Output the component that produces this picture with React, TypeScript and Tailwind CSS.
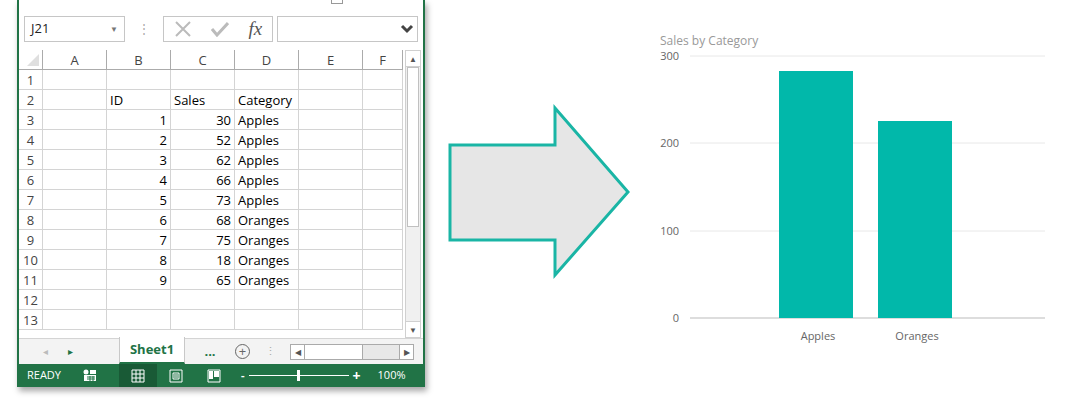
import React from "react";

const rows: (string | number)[][] = [
  ["", "", "", ""],
  ["", "ID", "Sales", "Category"],
  ["", 1, 30, "Apples"],
  ["", 2, 52, "Apples"],
  ["", 3, 62, "Apples"],
  ["", 4, 66, "Apples"],
  ["", 5, 73, "Apples"],
  ["", 6, 68, "Oranges"],
  ["", 7, 75, "Oranges"],
  ["", 8, 18, "Oranges"],
  ["", 9, 65, "Oranges"],
  ["", "", "", ""],
  ["", "", "", ""],
];
const cols = ["A", "B", "C", "D", "E", "F"];

function Cell({ v, right }: { v: string | number; right?: boolean }) {
  return (
    <div className={`h-[20px] border-r border-b border-[#d4d4d4] px-[3px] text-[13px] leading-[20px] text-black overflow-hidden whitespace-nowrap ${right ? "text-right" : ""}`}>
      {v}
    </div>
  );
}

export default function App() {
  return (
    <div className="w-[1066px] h-[403px] bg-white relative flex overflow-hidden" style={{ fontFamily: "'Segoe UI', 'Open Sans', 'Liberation Sans', sans-serif" }}>
      {/* Excel window */}
      <div className="ml-[17px] w-[408px] h-[387px] border-x-[2px] border-[#217346] flex flex-col bg-white shadow-[2px_4px_6px_rgba(0,0,0,0.35)]">
        <div className="h-[4px] relative">
          <div className="absolute right-[80px] top-0 w-[12px] h-[4px] border-x border-b border-[#999]" />
        </div>
        <div className="h-[12px]" />
        {/* formula bar */}
        <div className="flex items-center h-[26px] px-[5px] gap-[4px]">
          <div className="w-[101px] h-[26px] border border-[#c6c6c6] flex items-center justify-between px-[6px] text-[13px] text-[#222]">
            <span>J21</span>
            <span className="text-[8px] text-[#777]">▼</span>
          </div>
          <div className="w-[30px] text-center text-[#aaa] text-[12px]">⋮</div>
          <div className="w-[110px] h-[26px] border border-[#c6c6c6] flex items-center justify-around">
            <svg width="18" height="16" viewBox="0 0 18 16"><path d="M2 1L16 15M16 1L2 15" stroke="#bbb" strokeWidth="2" /></svg>
            <svg width="18" height="16" viewBox="0 0 18 16"><path d="M1 8L6 14L17 2" stroke="#bbb" strokeWidth="3" fill="none" /></svg>
            <span className="italic text-[19px] text-[#555]" style={{ fontFamily: "'Liberation Serif', serif" }}>fx</span>
          </div>
          <div className="flex-1 h-[26px] border border-[#c6c6c6] flex items-center justify-end pr-[3px]">
            <svg width="14" height="10" viewBox="0 0 14 10"><path d="M2 2L7 7L12 2" stroke="#444" strokeWidth="3" fill="none" /></svg>
          </div>
        </div>
        <div className="h-[8px]" />
        {/* grid + scrollbar */}
        <div className="flex h-[288px]">
          <div className="w-[384px] grid grid-cols-[24px_64px_64px_64px_64px_64px_40px] auto-rows-[20px] content-start overflow-hidden">
            <div className="h-[20px] border-r border-b border-[#ababab] relative bg-white">
              <div className="absolute right-[3px] bottom-[3px] w-0 h-0 border-l-[12px] border-l-transparent border-b-[12px] border-b-[#dfdfdf]" />
            </div>
            {cols.map((c) => (
              <div key={c} className="h-[20px] border-r border-b border-[#ababab] text-center text-[13px] leading-[20px] text-[#444]">{c}</div>
            ))}
            {rows.map((r, i) => (
              <React.Fragment key={i}>
                <div className="h-[20px] border-r border-b border-[#d4d4d4] text-center text-[13px] leading-[20px] text-[#444] bg-white">{i + 1}</div>
                <Cell v={r[0]} />
                <Cell v={r[1]} right={typeof r[1] === "number"} />
                <Cell v={r[2]} right={typeof r[2] === "number"} />
                <Cell v={r[3]} />
                <Cell v="" />
                <Cell v="" />
              </React.Fragment>
            ))}
          </div>
          <div className="w-[16px] ml-[2px] flex flex-col bg-[#f0f0f0] border border-[#d0d0d0]">
            <div className="h-[16px] bg-white border-b border-[#d0d0d0] flex items-center justify-center text-[8px] text-[#555]">▲</div>
            <div className="h-[160px] mx-[1px] bg-white border border-[#c0c0c0]" />
            <div className="flex-1" />
            <div className="h-[16px] bg-white border-t border-[#d0d0d0] flex items-center justify-center text-[8px] text-[#555]">▼</div>
          </div>
        </div>
        {/* tabs */}
        <div className="h-[26px] bg-[#f3f3f3] flex items-end border-t border-[#d4d4d4] text-[13px]">
          <div className="w-[100px] h-full flex items-center gap-[20px] pl-[24px] text-[10px]">
            <span className="text-[#bbb]">◂</span><span className="text-[#217346]">▸</span>
          </div>
          <div className="w-[66px] h-[27px] bg-white border-x border-[#c8c8c8] border-b-[2px] border-b-[#217346] text-[#217346] font-bold flex items-center justify-center">Sheet1</div>
          <div className="w-[50px] h-full flex items-center justify-center text-[#217346] font-bold">...</div>
          <div className="h-full flex items-center">
            <div className="w-[15px] h-[15px] rounded-full border border-[#666] flex items-center justify-center text-[13px] leading-none text-[#666]">+</div>
          </div>
          <div className="w-[40px] h-full flex items-center justify-center text-[#aaa] text-[11px]">⋮</div>
          <div className="h-full flex items-center">
            <div className="w-[124px] h-[16px] border border-[#aaa] bg-[#e8e8e8] flex">
              <div className="w-[14px] bg-white border-r border-[#aaa] text-[8px] flex items-center justify-center text-[#555]">◀</div>
              <div className="w-[58px] bg-white border-r border-[#aaa]" />
              <div className="flex-1" />
              <div className="w-[14px] bg-white border-l border-[#aaa] text-[8px] flex items-center justify-center text-[#555]">▶</div>
            </div>
          </div>
        </div>
        {/* status bar */}
        <div className="h-[23px] bg-[#217346] flex items-center text-white text-[11px]">
          <span className="ml-[8px] w-[50px]">READY</span>
          <svg className="ml-[6px]" width="14" height="13" viewBox="0 0 14 13"><circle cx="3" cy="3" r="2.5" fill="white" /><rect x="1" y="6" width="12" height="6" fill="white" /><rect x="7" y="1" width="6" height="4" fill="white" /><path d="M4 8h8M4 10h8M7 7v5M10 7v5" stroke="#217346" /></svg>
          <div className="ml-[22px] w-[38px] h-[23px] bg-[#195a36] flex items-center justify-center">
            <svg width="14" height="14" viewBox="0 0 14 14"><path d="M1 1h12v12H1zM1 5h12M1 9h12M5 1v12M9 1v12" stroke="white" fill="none" /></svg>
          </div>
          <svg className="ml-[12px]" width="14" height="14" viewBox="0 0 14 14"><path d="M1 1h12v12H1zM4 4h6v6H4zM5 6h4M5 8h4" stroke="white" fill="none" /></svg>
          <svg className="ml-[24px]" width="14" height="14" viewBox="0 0 14 14"><path d="M1 1h12v12H1z" stroke="white" fill="none" /><rect x="2" y="2" width="4" height="8" fill="white" /><rect x="7" y="2" width="5" height="6" fill="white" /></svg>
          <span className="ml-[20px] font-bold">-</span>
          <div className="ml-[4px] w-[100px] h-[1px] bg-white relative">
            <div className="absolute left-[48px] -top-[5px] w-[3px] h-[11px] bg-white" />
          </div>
          <span className="ml-[4px] font-bold text-[14px]">+</span>
          <span className="ml-[17px]">100%</span>
        </div>
      </div>

      {/* arrow */}
      <svg className="absolute left-[445px] top-[100px]" width="190" height="185" viewBox="445 100 190 185">
        <polygon points="450,145 555,145 555,108 628,192 555,275 555,240 450,240" fill="#e6e6e6" stroke="#1ab5a5" strokeWidth="3" />
      </svg>

      {/* chart */}
      <div className="absolute left-[655px] top-[30px] w-[400px] h-[330px]">
        <div className="absolute left-[5px] top-[2px] text-[12px] text-[#999]">Sales by Category</div>
        <svg className="absolute left-0 top-0" width="400" height="330" viewBox="655 30 400 330">
          {[
            [56, "300"],
            [143, "200"],
            [231, "100"],
            [318, "0"],
          ].map(([y, t]) => (
            <g key={t as string}>
              <line x1="690" x2="1045" y1={y as number} y2={y as number} stroke={t === "0" ? "#bbb" : "#e8e8e8"} />
              <text x="679" y={(y as number) + 4} textAnchor="end" fontSize="11" fill="#666">{t}</text>
            </g>
          ))}
          <rect x="779" y="71" width="74" height="247" fill="#01b8aa" />
          <rect x="878" y="121" width="74" height="197" fill="#01b8aa" />
          <text x="818" y="340" textAnchor="middle" fontSize="11" fill="#666">Apples</text>
          <text x="917" y="340" textAnchor="middle" fontSize="11" fill="#666">Oranges</text>
        </svg>
      </div>
    </div>
  );
}
